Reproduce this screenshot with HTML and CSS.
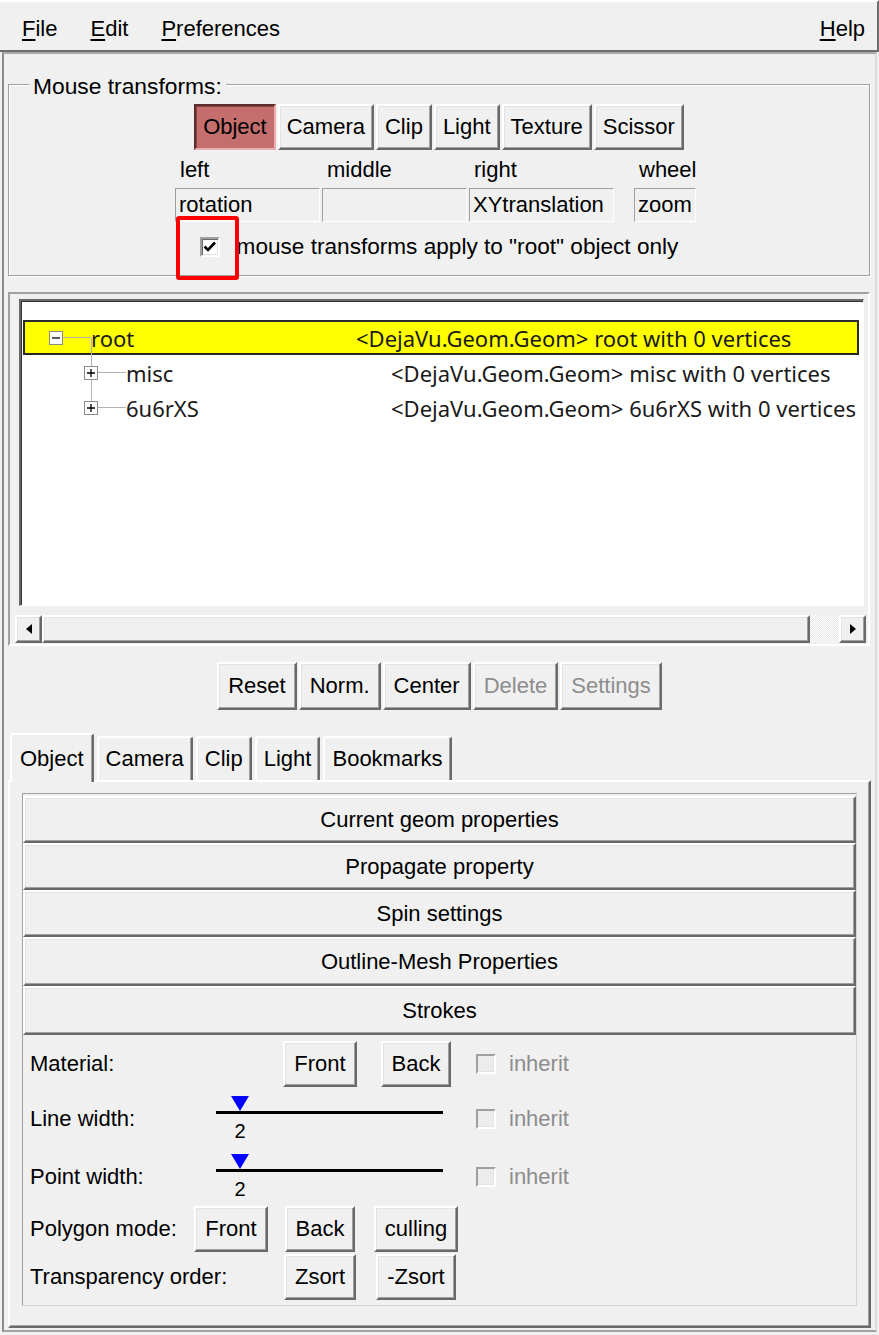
FILE: index.html
```html
<!DOCTYPE html>
<html lang="en">

<head>
  <meta charset="UTF-8">
  <meta name="viewport" content="width=device-width, initial-scale=1.0">
  <title>Viewer</title>
  <link rel="stylesheet" href="styles.css">
</head>

<body>
  <div class="menubar">
    <span class="menu-item"><u>F</u>ile</span>
    <span class="menu-item"><u>E</u>dit</span>
    <span class="menu-item"><u>P</u>references</span>
    <span class="menu-item menu-help"><u>H</u>elp</span>
  </div>

  <div class="main">
    <fieldset class="mouse-frame">
      <legend>Mouse transforms:</legend>
      <div class="mode-row">
        <button class="btn mode-btn active">Object</button>
        <button class="btn mode-btn">Camera</button>
        <button class="btn mode-btn">Clip</button>
        <button class="btn mode-btn">Light</button>
        <button class="btn mode-btn">Texture</button>
        <button class="btn mode-btn">Scissor</button>
      </div>
      <div class="binding-grid">
        <span class="binding-label">left</span>
        <span class="binding-label">middle</span>
        <span class="binding-label">right</span>
        <span class="binding-label wheel">wheel</span>
        <div class="entry">rotation</div>
        <div class="entry"></div>
        <div class="entry">XYtranslation</div>
        <div class="entry wheel">zoom</div>
      </div>
      <div class="root-only">
        <span class="check">
          <svg width="16" height="16" viewBox="0 0 16 16">
            <path d="M2.5 7.5 L6 11 L13 3.5" fill="none" stroke="#000" stroke-width="2.6" />
          </svg>
          <span class="highlight-box"></span>
        </span>
        <span>mouse transforms apply to "root" object only</span>
      </div>
    </fieldset>

    <div class="tree-frame">
      <div class="tree-canvas">
        <div class="tree-row selected root-node">
          <svg class="expander" width="14" height="14" viewBox="0 0 14 14">
            <rect x="0.5" y="0.5" width="13" height="13" fill="#fff" stroke="#8c8c8c" />
            <path d="M3 7 H11" stroke="#000" stroke-width="1.3" />
          </svg>
          <span class="connector"></span>
          <span class="node-name">root</span>
          <span class="node-desc">&lt;DejaVu.Geom.Geom&gt; root with 0 vertices</span>
        </div>
        <div class="tree-row child">
          <svg class="expander" width="14" height="14" viewBox="0 0 14 14">
            <rect x="0.5" y="0.5" width="13" height="13" fill="#fff" stroke="#8c8c8c" />
            <path d="M3 7 H11 M7 3 V11" stroke="#000" stroke-width="1.3" />
          </svg>
          <span class="connector"></span>
          <span class="node-name">misc</span>
          <span class="node-desc">&lt;DejaVu.Geom.Geom&gt; misc with 0 vertices</span>
        </div>
        <div class="tree-row child last">
          <svg class="expander" width="14" height="14" viewBox="0 0 14 14">
            <rect x="0.5" y="0.5" width="13" height="13" fill="#fff" stroke="#8c8c8c" />
            <path d="M3 7 H11 M7 3 V11" stroke="#000" stroke-width="1.3" />
          </svg>
          <span class="connector"></span>
          <span class="node-name">6u6rXS</span>
          <span class="node-desc">&lt;DejaVu.Geom.Geom&gt; 6u6rXS with 0 vertices</span>
        </div>
      </div>
      <div class="hscroll">
        <div class="scroll-arrow">
          <svg width="8" height="12" viewBox="0 0 8 12"><polygon points="7,1 7,11 1,6" fill="#000" /></svg>
        </div>
        <div class="scroll-thumb"></div>
        <div class="scroll-trough"></div>
        <div class="scroll-arrow">
          <svg width="8" height="12" viewBox="0 0 8 12"><polygon points="1,1 1,11 7,6" fill="#000" /></svg>
        </div>
      </div>
    </div>

    <div class="action-row">
      <button class="btn">Reset</button>
      <button class="btn">Norm.</button>
      <button class="btn">Center</button>
      <button class="btn" disabled>Delete</button>
      <button class="btn" disabled>Settings</button>
    </div>

    <div class="notebook">
      <div class="tabs">
        <span class="tab selected">Object</span>
        <span class="tab">Camera</span>
        <span class="tab">Clip</span>
        <span class="tab">Light</span>
        <span class="tab">Bookmarks</span>
      </div>
      <div class="tab-panel">
        <div class="prop-frame">
          <button class="btn section-btn">Current geom properties</button>
          <button class="btn section-btn">Propagate property</button>
          <button class="btn section-btn">Spin settings</button>
          <button class="btn section-btn tall">Outline-Mesh Properties</button>
          <button class="btn section-btn tall">Strokes</button>

          <div class="prop-grid">
            <span class="prop-label">Material:</span>
            <button class="btn c3">Front</button>
            <button class="btn c4">Back</button>
            <span class="inherit"><span class="check off"></span>inherit</span>

            <span class="prop-label">Line width:</span>
            <div class="slider">
              <svg class="slider-marker" width="18" height="15" viewBox="0 0 18 15"><polygon points="0,0 18,0 9,15" fill="#0000ff" /></svg>
              <div class="slider-track"></div>
              <div class="slider-value">2</div>
            </div>
            <span class="inherit"><span class="check off"></span>inherit</span>

            <span class="prop-label">Point width:</span>
            <div class="slider">
              <svg class="slider-marker" width="18" height="15" viewBox="0 0 18 15"><polygon points="0,0 18,0 9,15" fill="#0000ff" /></svg>
              <div class="slider-track"></div>
              <div class="slider-value">2</div>
            </div>
            <span class="inherit"><span class="check off"></span>inherit</span>

            <span class="prop-label">Polygon mode:</span>
            <button class="btn c2">Front</button>
            <button class="btn c3">Back</button>
            <button class="btn c4">culling</button>

            <span class="prop-label wide">Transparency order:</span>
            <button class="btn c3">Zsort</button>
            <button class="btn c4">-Zsort</button>
          </div>
        </div>
      </div>
    </div>
  </div>
</body>

</html>
```

FILE: styles.css
```css
* {
  box-sizing: border-box;
}

body {
  margin: 0;
  width: 879px;
  background: #f0f0f0;
  font-family: "Liberation Sans", Arial, sans-serif;
  font-size: 22px;
  line-height: 26px;
  color: #000;
}

button {
  font: inherit;
  color: inherit;
  margin: 0;
}

u {
  text-underline-offset: 3px;
}

/* raised tk-style button */
.btn {
  height: 46px;
  padding: 0 9px;
  background: #f0f0f0;
  border: 2px solid;
  border-color: #fff #696969 #696969 #fff;
  border-radius: 0;
  box-shadow: inset -1px -1px 0 #a0a0a0, inset 1px 1px 0 #e3e3e3;
  white-space: nowrap;
}

.btn:disabled {
  color: #8d8d8d;
}

.menubar {
  display: flex;
  height: 52px;
  padding: 6px 0 0 22px;
  gap: 33px;
  border-top: 2px solid #fff;
  border-right: 2px solid #6e6e6e;
  border-bottom: 2px solid #6e6e6e;
  line-height: 42px;
}

.menu-help {
  margin-left: auto;
  margin-right: 12px;
}

.main {
  width: 875px;
  margin-left: 2px;
  padding-bottom: 2px;
  border-left: 2px solid #8c8c8c;
  border-right: 2px solid #dcdcdc;
  border-top: 2px solid #a9a9a9;
  border-bottom: 2px solid #a0a0a0;
}

/* Mouse transforms */
.mouse-frame {
  margin: 15px 5px 0 4px;
  padding: 0 20px 15px;
  min-width: 0;
  border: 1px solid #a0a0a0;
  box-shadow: 1px 1px 0 #fff, inset 1px 1px 0 #fff;
}

.mouse-frame legend {
  padding: 4px 4px 0;
  font-size: 22.8px;
  line-height: 26px;
  background: #f0f0f0;
}

.mode-row {
  display: flex;
  justify-content: center;
  gap: 2px;
  margin-top: 5px;
}

.mode-btn {
  padding: 0 7px;
}

.mode-btn.active {
  background: #c56e6e;
  border-color: #5c2e2e #eab0b0 #eab0b0 #5c2e2e;
  box-shadow: inset 1px 1px 0 #8a4444;
}

.binding-grid {
  display: grid;
  grid-template-columns: 145px 145px 145px 80px;
  column-gap: 2px;
  row-gap: 5px;
  width: 521px;
  margin: 7px 0 0 146px;
}

.binding-label {
  padding-left: 5px;
}

.wheel {
  margin-left: 18px;
}

.entry {
  height: 34px;
  padding-left: 3px;
  border: 1px solid;
  border-color: #a0a0a0 #fff #fff #a0a0a0;
  line-height: 32px;
  white-space: nowrap;
  overflow: hidden;
}

.root-only {
  display: flex;
  justify-content: center;
  align-items: center;
  gap: 17px;
  margin-top: 12px;
  font-size: 22.6px;
}

.check {
  position: relative;
  display: inline-flex;
  flex: none;
  width: 20px;
  height: 20px;
  background: #fff;
  border: 2px solid;
  border-color: #a0a0a0 #fff #fff #a0a0a0;
  box-shadow: inset 1px 1px 0 #696969, inset -1px -1px 0 #e3e3e3;
}

.check.off {
  background: #ececec;
  box-shadow: inset -1px -1px 0 #e3e3e3;
}

.highlight-box {
  position: absolute;
  left: -26px;
  top: -23px;
  width: 63px;
  height: 64px;
  border: 4px solid #ff0000;
  border-radius: 3px;
  z-index: 2;
}

/* Object tree */
.tree-frame {
  margin: 16px 5px 0 4px;
  padding: 5px 2px 1px 5px;
  border: 2px solid;
  border-color: #a0a0a0 #fff #fff #a0a0a0;
}

.tree-canvas {
  height: 307px;
  margin: 0 2px 9px 4px;
  padding-top: 19px;
  background: #fff;
  border-style: solid;
  border-width: 2px 1px 1px 2px;
  border-color: #696969 #fff #fff #696969;
  box-shadow: inset 1px 1px 0 #333;
}

.tree-row {
  position: relative;
  display: flex;
  align-items: center;
  height: 35px;
  margin: 0 4px 0 2px;
  padding-left: 59px;
  border: 2px solid transparent;
  font-family: "Noto Sans", "Open Sans", sans-serif;
  font-size: 22px;
  color: #1a1a1a;
  white-space: nowrap;
}

.tree-row.selected {
  background: #ffff00;
  border-color: #2a2a2a;
}

.tree-row.root-node {
  padding-left: 24px;
}

.expander {
  position: relative;
  z-index: 1;
  flex: none;
}

.connector {
  flex: none;
  width: 28px;
  height: 1px;
  background: #b4b4b4;
}

.node-name {
  flex: none;
  width: 265px;
}

.root-node::after,
.child::before {
  content: "";
  position: absolute;
  left: 66px;
  width: 1px;
  background: #b4b4b4;
}

.root-node::after {
  top: 50%;
  bottom: -2px;
}

.child::before {
  top: -2px;
  bottom: -2px;
}

.child.last::before {
  bottom: 50%;
}

.hscroll {
  display: flex;
  height: 28px;
}

.scroll-arrow,
.scroll-thumb {
  background: #f0f0f0;
  border: 2px solid;
  border-color: #fff #696969 #696969 #fff;
  box-shadow: inset -1px -1px 0 #a0a0a0, inset 1px 1px 0 #e3e3e3;
}

.scroll-arrow {
  display: flex;
  align-items: center;
  justify-content: center;
  width: 27px;
}

.scroll-thumb {
  flex: 1;
}

.scroll-trough {
  width: 29px;
  background: repeating-conic-gradient(#fff 0 25%, #e6e6e6 0 50%) 0 0 / 2px 2px;
}

.action-row {
  display: flex;
  justify-content: center;
  gap: 2px;
  margin-top: 16px;
}

.action-row .btn {
  height: 48px;
}

/* Notebook */
.notebook {
  margin: 23px 4px 0 4px;
}

.tabs {
  display: flex;
  align-items: flex-end;
  gap: 3px;
  padding-left: 2px;
}

.tab {
  height: 44px;
  padding: 0 7px;
  border-style: solid;
  border-width: 2px 2px 0 2px;
  border-color: #fff #696969 transparent #fff;
  border-radius: 3px 3px 0 0;
  box-shadow: inset -1px 0 0 #a0a0a0;
  line-height: 42px;
}

.tab.selected {
  position: relative;
  z-index: 1;
  height: 49px;
  padding: 3px 8px 0;
  margin-bottom: -2px;
  background: #f0f0f0;
}

.tab-panel {
  padding: 11px 12px 20px 12px;
  border: 2px solid;
  border-color: #fff #696969 #696969 #fff;
  box-shadow: inset -1px -1px 0 #a0a0a0;
}

.prop-frame {
  padding: 2px 0 4px 0;
  border: 1px solid;
  border-color: #a0a0a0 #d4d4d4 #d4d4d4 #a0a0a0;
}

.section-btn {
  display: block;
  width: 100%;
  height: 47px;
  text-align: center;
}

.section-btn.tall {
  height: 49px;
}

.prop-grid {
  display: grid;
  grid-template-columns: 163px 76px 102px 90px 1fr;
  grid-template-rows: 52px 58px 57px 48px 48px;
  align-items: center;
  margin-top: 3px;
  padding-left: 7px;
}

.prop-label {
  grid-column: 1;
  white-space: nowrap;
}

.prop-label.wide {
  grid-column: 1 / span 2;
}

.prop-grid .btn {
  justify-self: center;
}

.c2 {
  grid-column: 2;
}

.c3 {
  grid-column: 3;
}

.c4 {
  grid-column: 4;
}

.slider {
  grid-column: 2 / span 3;
  padding-left: 23px;
}

.slider-marker {
  display: block;
  margin-left: 15px;
}

.slider-track {
  width: 227px;
  height: 3px;
  background: #000;
}

.slider-value {
  width: 18px;
  margin: 6px 0 0 15px;
  font-size: 20px;
  line-height: 22px;
  text-align: center;
}

.inherit {
  grid-column: 5;
  display: flex;
  align-items: center;
  gap: 13px;
  padding-left: 15px;
  color: #8d8d8d;
}
```
